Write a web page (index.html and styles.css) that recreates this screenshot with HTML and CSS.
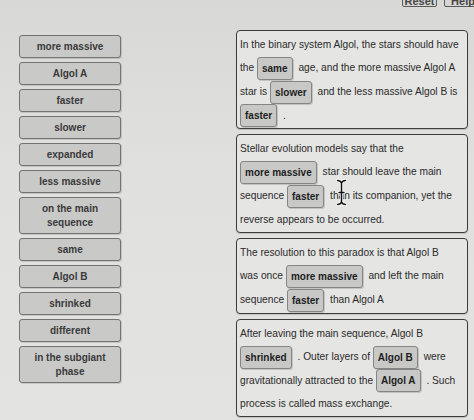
FILE: index.html
```html
<!DOCTYPE html>
<html>
<head>
<meta charset="utf-8">
<link rel="stylesheet" href="styles.css">
</head>
<body>
<div class="header">
  <span class="btn reset">Reset</span>
  <span class="btn help">Help</span>
</div>
<div class="main">
  <div class="bank">
    <div class="chip">more massive</div>
    <div class="chip">Algol A</div>
    <div class="chip">faster</div>
    <div class="chip">slower</div>
    <div class="chip">expanded</div>
    <div class="chip">less massive</div>
    <div class="chip">on the main<br>sequence</div>
    <div class="chip">same</div>
    <div class="chip">Algol B</div>
    <div class="chip">shrinked</div>
    <div class="chip">different</div>
    <div class="chip">in the subgiant<br>phase</div>
  </div>
  <div class="panels">
    <div class="panel">In the binary system Algol, the stars should have<br>the <span class="slot">same</span> age, and the more massive Algol A<br>star is <span class="slot">slower</span> and the less massive Algol B is<br><span class="slot">faster</span> .</div>
    <div class="panel cursor-host">Stellar evolution models say that the<br><span class="slot">more massive</span> star should leave the main<br>sequence <span class="slot">faster</span> than its companion, yet the<br>reverse appears to be occurred.<svg class="cursor" width="13" height="27" viewBox="0 0 13 27"><path d="M2.5 1.5 Q5.5 1.5 6.5 4 Q7.5 1.5 10.5 1.5 M6.5 4 V23 M2.5 25.5 Q5.5 25.5 6.5 23 Q7.5 25.5 10.5 25.5 M4 13.5 H9" fill="none" stroke="#fff" stroke-width="3.2" stroke-linecap="round"/><path d="M2.5 1.5 Q5.5 1.5 6.5 4 Q7.5 1.5 10.5 1.5 M6.5 4 V23 M2.5 25.5 Q5.5 25.5 6.5 23 Q7.5 25.5 10.5 25.5 M4 13.5 H9" fill="none" stroke="#111" stroke-width="1.5" stroke-linecap="round"/></svg></div>
    <div class="panel">The resolution to this paradox is that Algol B<br>was once <span class="slot">more massive</span> and left the main<br>sequence <span class="slot">faster</span> than Algol A</div>
    <div class="panel">After leaving the main sequence, Algol B<br><span class="slot">shrinked</span> . Outer layers of <span class="slot">Algol B</span> were<br>gravitationally attracted to the <span class="slot">Algol A</span> . Such<br>process is called mass exchange.</div>
  </div>
</div>
</body>
</html>
```
FILE: styles.css
```css
html, body {
  margin: 0;
  padding: 0;
  width: 474px;
  height: 420px;
  overflow: hidden;
}
body {
  background: linear-gradient(180deg, #d8d8d6 0%, #e0e0de 40%, #e3e3e1 100%);
  font-family: "Liberation Sans", Arial, sans-serif;
  color: #2a2a2a;
}
.header {
  display: flex;
  align-items: flex-end;
  height: 7px;
  padding-left: 402px;
  gap: 7px;
  width: 120px;
}
.btn {
  flex: none;
  height: 19px;
  box-sizing: border-box;
  border: 1px solid #5a5a5a;
  border-radius: 2px;
  background: #d6d6d4;
  padding-top: 6px;
  font-size: 11px;
  font-weight: bold;
  color: #444;
  text-align: center;
  line-height: 12px;
}
.reset { width: 35px; }
.help { width: 38px; }
.main {
  display: flex;
  align-items: flex-start;
}
.bank {
  width: 102px;
  margin: 28px 0 0 19px;
  display: flex;
  flex-direction: column;
  gap: 4px;
}
.chip {
  box-sizing: border-box;
  border: 1px solid #737373;
  border-radius: 3px;
  background: #c9c9c8;
  box-shadow: 1px 1px 0 rgba(0,0,0,0.12);
  padding: 3.5px 4px;
  line-height: 14px;
  font-size: 10px;
  font-weight: bold;
  color: #3a3a3a;
  text-align: center;
}
.panels {
  width: 232px;
  margin: 23px 0 0 115px;
  display: flex;
  flex-direction: column;
  gap: 5px;
}
.panel {
  position: relative;
  box-sizing: border-box;
  border: 1.5px solid #3c3c3c;
  border-radius: 4px;
  background: #e5e5e3;
  box-shadow: 0 1px 1px rgba(0,0,0,0.15);
  padding: 2px 2px 1px 3px;
  font-size: 10.2px;
  line-height: 23px;
  color: #2a2a2a;
  white-space: nowrap;
}
.slot {
  display: inline-block;
  box-sizing: border-box;
  height: 23px;
  line-height: 21px;
  padding: 0 4px;
  margin: 0 3px 0 0;
  border: 1px solid #858585;
  border-radius: 3px;
  background: #c8c8c7;
  box-shadow: 1px 1px 0 rgba(0,0,0,0.15);
  font-size: 10px;
  font-weight: bold;
  color: #1e1e1e;
  vertical-align: middle;
}
.cursor {
  position: absolute;
  left: 98px;
  top: 44px;
}
```
